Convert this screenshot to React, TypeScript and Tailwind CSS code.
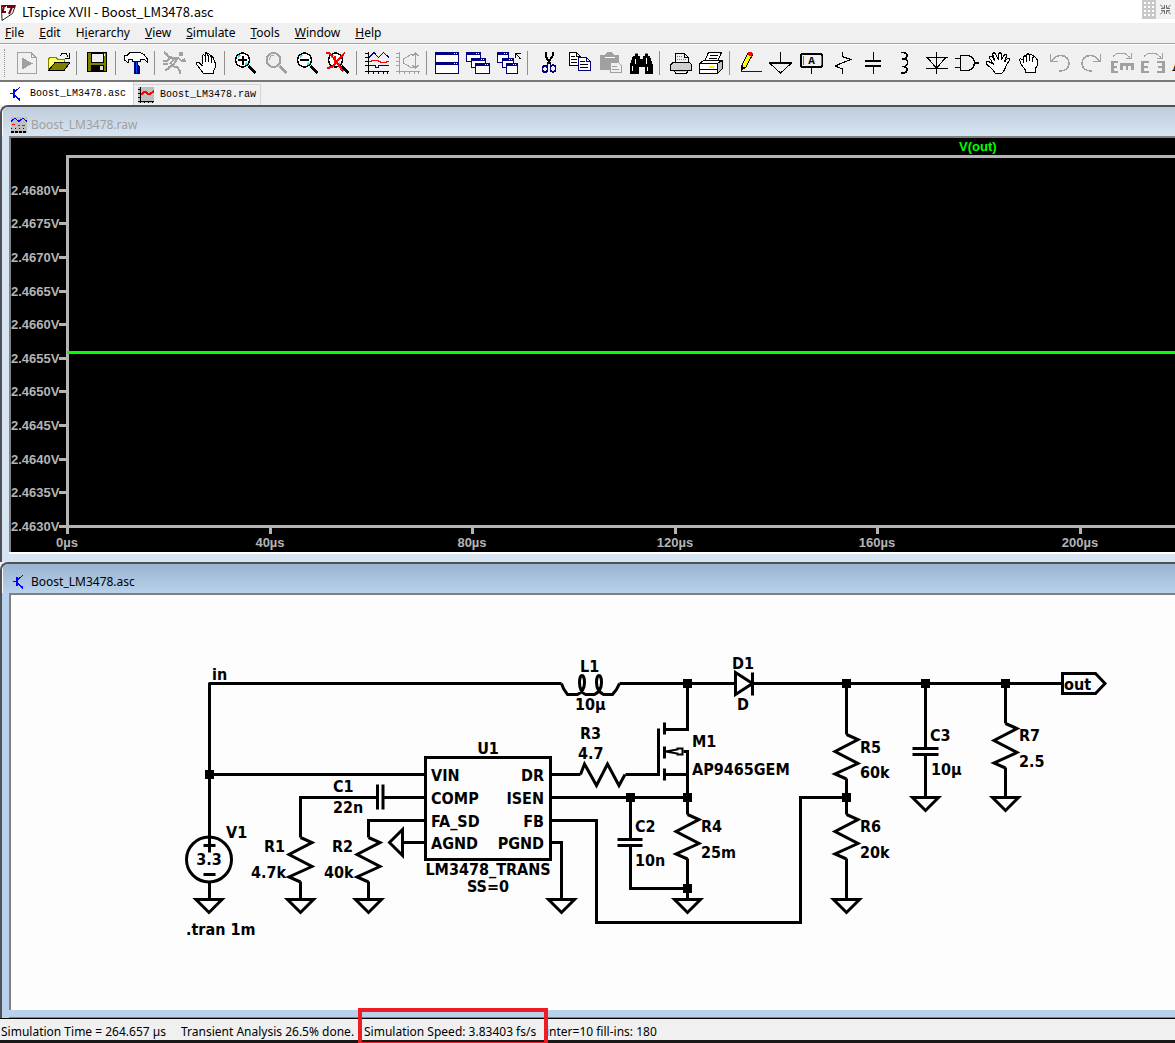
import { ReactNode } from 'react';
import clsx from 'clsx';

const MENUS = [
    { before: '', key: 'F', after: 'ile' },
    { before: '', key: 'E', after: 'dit' },
    { before: 'H', key: 'i', after: 'erarchy' },
    { before: '', key: 'V', after: 'iew' },
    { before: '', key: 'S', after: 'imulate' },
    { before: '', key: 'T', after: 'ools' },
    { before: '', key: 'W', after: 'indow' },
    { before: '', key: 'H', after: 'elp' },
];

const GRAY = '#a0a0a0';
const NAVY = '#000080';

/* ---------- toolbar icons, all drawn on a 24x24 grid ---------- */

function Magnifier({ color = '#000', glass = '#fff', children }: { color?: string; glass?: string; children?: ReactNode }) {
    return (
        <>
            <circle cx="9.5" cy="9" r="7" fill={glass} stroke={color} strokeWidth="1.5" />
            <path d="M5 6.5l2-2.5M12 14l2-2" stroke={glass === '#fff' ? '#00ffff' : 'none'} strokeWidth="2" />
            <path d="M15.5 15l7 7" stroke={color} strokeWidth="3.5" />
            {children}
        </>
    );
}

function Axes({ color }: { color: string }) {
    return <path d="M3.5 1v22M0 2.5h4M0 6.5h4M0 10.5h4M0 14.5h4M0 20.5h24M8.5 20v3M13.5 20v3M18.5 20v3M22.5 20v3" stroke={color} />;
}

function MiniWindow({ x, y, w, h }: { x: number; y: number; w: number; h: number }) {
    return (
        <>
            <rect x={x + 0.5} y={y + 0.5} width={w - 1} height={h - 1} fill="#fff" stroke={NAVY} />
            <rect x={x} y={y} width={w} height="3" fill={NAVY} />
            <path d={`M${x + w - 5} ${y + 1.5}h1m1 0h1`} stroke="#fff" />
        </>
    );
}

const ICONS: Record<string, ReactNode> = {
    run: (
        <>
            <path d="M2.5 1.5H16l5 5v16H2.5zM16 1.5v5h5" stroke={GRAY} />
            <path d="M7 6.5l11 6-11 6z" fill={GRAY} />
        </>
    ),
    open: (
        <>
            <path d="M2.5 19.5V8l2-2h5l2 2h6.500v4" fill="#ffff66" stroke="#808000" />
            <path d="M9 11.500h15l-6 8H2.500z" fill="#808000" stroke="#000" />
            <path d="M14 5l2-2.500h4l2 3.500M23.500 2v5h-5" stroke="#000" />
        </>
    ),
    save: (
        <>
            <rect x="2.5" y="1.5" width="19" height="19" fill="#808000" stroke="#000" />
            <rect x="6" y="2" width="12" height="9" fill="#f0f0f0" stroke="#000" />
            <rect x="6" y="14" width="13" height="7" fill="#000" />
            <rect x="15" y="15" width="3" height="4" fill="#e0e0e0" />
            <rect x="19" y="3" width="1" height="2" fill="#fff" />
        </>
    ),
    panel: (
        <>
            <path d="M.5 4.500h2.500l3-3h10l4 2 3 4 1 4.500-3-3-3-1h-2v2H8.500V8.500L6 8l-2 1.500v2L.5 9z" fill="#fff" stroke="#000" />
            <path d="M10 10h4v4l1.500 1v7.500H9.500V15l.5-1z" fill={NAVY} />
            <path d="M12.500 11v11" stroke="#0050ff" />
        </>
    ),
    halt: (
        <>
            <rect x="16" y="1" width="4" height="4" fill={GRAY} />
            <path d="M1 1l4 3M3 3l3 3h3M7 6.500h8l3 3h5M7 6.500L4 10H0M15 6l-4 7-3 2 6 1 3 4v3M9 14l-4 4-3 1M0 13h5M11 8l-4 5M18 10l4-2" stroke={GRAY} strokeWidth="2" />
        </>
    ),
    hand: (
        <path d="M8.500 13V5l1-1.500L11 5V3l1-1.500L13.500 3v1l1-1.500L16 4v2l1-1.500L19 6.500l2 5V17l-2 4v1.500H9.500L7 19l-4.500-6v-2h2l4 4M11.500 5v6M14.500 4v7M17.500 6v6" fill="#fff" stroke="#000" />
    ),
    zoomIn: (
        <Magnifier>
            <path d="M5 9h9M9.500 4.500v9" stroke="#000" strokeWidth="2" />
        </Magnifier>
    ),
    zoomBack: (
        <Magnifier color={GRAY} glass="#efefef">
            <circle cx="9.500" cy="9" r="7" stroke={GRAY} strokeWidth="2" />
            <path d="M5 9l2-4 3-1" stroke={GRAY} />
        </Magnifier>
    ),
    zoomOut: (
        <Magnifier>
            <path d="M5 9h9" stroke="#000" strokeWidth="2" />
        </Magnifier>
    ),
    zoomFit: (
        <Magnifier>
            <path d="M0 1.500h3l4 5 4 5 6 9M19 1.500L12 9l-6 7-5 1M9 5v9" stroke="#ff0000" strokeWidth="2" />
        </Magnifier>
    ),
    plot: (
        <>
            <Axes color="#000" />
            <path d="M4 6.500l5-5 4.500 5 5-5 5.500 5" stroke="#0000a0" />
            <path d="M4 10.500h2v-1h7v1h2v1h6v-1h3" stroke="#ff0000" />
            <path d="M4 14.500h6.500v2h3v-2H24" stroke={NAVY} />
        </>
    ),
    fft: (
        <>
            <Axes color={GRAY} />
            <path d="M19.500 2v16M16.500 5l3-3 3 3M16.500 14l3 3 3-3M19 3.500h-4L7.500 8v4l7.500 4.500h4" stroke={GRAY} />
        </>
    ),
    tile: (
        <>
            <MiniWindow x={0} y={1} w={24} h={12} />
            <MiniWindow x={0} y={11} w={24} h={12} />
        </>
    ),
    cascade: (
        <>
            <MiniWindow x={0} y={1} w={15} h={10} />
            <MiniWindow x={5} y={7} w={15} h={10} />
            <MiniWindow x={9} y={12} w={15} h={11} />
        </>
    ),
    closeAll: (
        <>
            <MiniWindow x={0} y={1} w={12} h={11} />
            <MiniWindow x={5} y={7} w={12} h={10} />
            <MiniWindow x={9} y={12} w={12} h={11} />
            <path d="M18.500 7V2h5M18.500 2l5 6" stroke="#000" />
        </>
    ),
    cut: (
        <>
            <path d="M9.500 1v4l5 8M16.500 1v4l-5 8" stroke="#000" strokeWidth="2" />
            <ellipse cx="9" cy="18" rx="2.500" ry="3.500" stroke={NAVY} strokeWidth="1.5" />
            <ellipse cx="17" cy="17.500" rx="2.500" ry="3.500" stroke={NAVY} strokeWidth="1.5" />
            <path d="M13 12l-2.500 3M13 12l2.500 3" stroke={NAVY} />
        </>
    ),
    copy: (
        <>
            <path d="M2.500 1.500h7l4 4v9h-11zM9.500 1.500v4h4" fill="#fff" stroke="#000" />
            <path d="M4 5.500h4M4 8.500h6M4 11.500h6" stroke="#000" />
            <path d="M11.500 6.500h8l4 4v9h-12zM19.500 6.500v4h4" fill="#fff" stroke={NAVY} />
            <path d="M13 10.500h5M13 13.500h8M13 16.500h8" stroke="#000" />
        </>
    ),
    paste: (
        <>
            <path d="M2 4h5l2-3h5l2 3h5v15H2z" fill={GRAY} />
            <path d="M7 6.500h10" stroke="#fff" />
            <path d="M12.500 11.500h8l3 3v7h-11z" fill="#efefef" stroke={GRAY} />
            <path d="M14 15.500h5M14 18.500h7" stroke={GRAY} />
        </>
    ),
    find: (
        <>
            <path d="M6 2h3v3h2v3h3V5h2V2h3v3h2l3 9v9h-8v-7h-6v7H1v-9l3-9h2z" fill="#000" />
            <path d="M6.500 8v5M3.500 15v5M17.500 7v6M18.500 16v4" stroke="#fff" strokeWidth="1.5" />
            <path d="M6 2.500h3M16 2.500h3" stroke="#888" />
        </>
    ),
    printSetup: (
        <>
            <path d="M7.500 12V2.500h9l4 4V12M16.500 2.500v4h4" fill="#f0f0f0" stroke="#000" />
            <path d="M9 5.500h6M9 8.500h10" stroke="#777" strokeDasharray="1 1" />
            <path d="M2.500 14l3-3h16l2 3v5h-3l-2 3.500H8L5.500 19h-3z" fill="#d0d0d0" stroke="#000" />
            <path d="M5 19.500h16" stroke="#000" />
            <path d="M8 21h10" stroke="#fff" />
        </>
    ),
    print: (
        <>
            <path d="M5.500 10l4-8.500h13l-4 8.500z" fill="#fff" stroke="#000" />
            <path d="M11 4.500h8M10 7.500h8" stroke="#000" />
            <path d="M.5 12.500l4-3h18l-4 3z" fill="#fff" stroke="#000" />
            <path d="M18.500 12.500l5-3v8l-5 5z" fill="#c0c0c0" stroke="#000" />
            <path d="M.5 12.500h18v10H.5zM.5 18.500h18" fill="#fff" stroke="#000" />
            <path d="M10 15.500h5" stroke="#ffee00" strokeWidth="2" />
        </>
    ),
    wire: (
        <>
            <path d="M4 14L10 2.500l4 2L8 16l-4 3z" fill="#ffff00" stroke="#000" />
            <path d="M10 1h4l1 2-1 3-4-2z" fill="#ff0000" />
            <path d="M3 14l4 3-4 3z" fill="#000" />
            <path d="M3 20.500h21" stroke="#0000ff" />
        </>
    ),
    ground: (
        <>
            <path d="M11.500 1v11M1.500 13l10 9 10-9" stroke="#000" />
            <path d="M0 12h23" stroke="#000" strokeWidth="2" />
        </>
    ),
    label: (
        <>
            <rect x="1" y="3" width="21" height="13" rx="2" stroke="#000" strokeWidth="2" />
            <path d="M3 5v9M21.500 5v9" stroke="#808000" />
            <path d="M11.500 16v7" stroke="#000" />
            <text x="11.500" y="13" textAnchor="middle" fill="#000" className="text-[11px] font-bold font-['Liberation_Mono',monospace]">A</text>
        </>
    ),
    resistor: <path d="M11.500 1v4.500l8 3L4 15l7.500 3v5" stroke="#000" strokeWidth="1.200" />,
    capacitor: (
        <>
            <path d="M11.500 1v9M11.500 16v7" stroke="#000" />
            <path d="M3 10h16M3 15h16" stroke="#000" strokeWidth="2" />
        </>
    ),
    inductor: <path d="M8 1.500h3c4 1 4 5.500 0 6.500H9h2c5 1 5 6.500 0 7.500H9h2c4 1 4 5.500 0 6.500H8" stroke="#000" strokeWidth="1.500" />,
    diode: <path d="M12.500 1v22M1.500 6.500H24M3.500 7l9 10 9-10M1.500 17.500H24" stroke="#000" strokeWidth="1.200" />,
    gate: (
        <>
            <path d="M5.500 4.500H13c4 1 6.500 4 6.500 7.500S17 19 13 19.500H5.500z" stroke="#000" strokeWidth="1.500" />
            <path d="M0 7.500h5M0 16.500h5" stroke="#000" />
            <path d="M19 12h5" stroke="#000" strokeWidth="2.500" />
        </>
    ),
    move: (
        <path d="M7.500 13L3.500 7 4 5l2 .5L9 10 6.500 3 8 1.500 9.500 3l3 6V3L14 1.500 15.500 3v6l3-5.500H20L20.500 5l-2 6 3.500-4h1.500v2l-4 7-1 3-3 3.500H9.500L7 19l-6.500-6V11l2-.5z" fill="#fff" stroke="#000" />
    ),
    drag: (
        <path d="M6.500 12V6L8 4.500 9.500 6V4L11 2.500l1.500 1.500v6V4l1.500-1L16 4.500V7l1.500-1.500L19 7v2l1.500-.5V14L18 18v3.500H8.500V19l-4-5-2-5 1-1.500L6 9M9.500 5v6M15.500 6v5" fill="#fff" stroke="#000" />
    ),
    undo: (
        <>
            <path d="M4 10C9 2 20 3 21 12c0 5-4 8.500-10 8" stroke={GRAY} strokeWidth="1.500" />
            <path d="M2.500 3v7.500H10" stroke={GRAY} strokeWidth="1.500" />
        </>
    ),
    redo: (
        <>
            <path d="M20 10C15 2 4 3 3 12c0 5 4 8.500 10 8" stroke={GRAY} strokeWidth="1.500" />
            <path d="M21.500 3v7.500H14" stroke={GRAY} strokeWidth="1.500" />
        </>
    ),
    rotate: (
        <>
            <path d="M3 5.500l4-3h8l5 4M21 2v5h-5" stroke={GRAY} />
            <path d="M1 10h3v12H1zM3 10h5v2H3zM3 15h4v2H3zM3 20h5v2H3zM10 12h14v3H10zM10 14h3v5h-3zM16 14h2v5h-2zM21 14h3v5h-3z" fill={GRAY} />
        </>
    ),
    mirror: (
        <>
            <path d="M3 5.500l4-3h8l5 4M21 2v5h-5" stroke={GRAY} />
            <path d="M0 10h3v12H0zM3 10h5v2H3zM3 15h4v2H3zM3 20h5v2H3zM21 10h3v12h-3zM16 10h5v2h-5zM17 15h4v2h-4zM16 20h5v2h-5z" fill={GRAY} />
        </>
    ),
    text: (
        <text x="0" y="20" fill="#000" className="text-[20px] font-bold font-['Liberation_Serif',serif]">Aa</text>
    ),
};

const TOOLBAR = [
    ['run', 'open'],
    ['save'],
    ['panel'],
    ['halt', 'hand'],
    ['zoomIn', 'zoomBack', 'zoomOut', 'zoomFit'],
    ['plot', 'fft'],
    ['tile', 'cascade', 'closeAll'],
    ['cut', 'copy', 'paste', 'find'],
    ['printSetup', 'print'],
    ['wire', 'ground', 'label', 'resistor', 'capacitor', 'inductor', 'diode', 'gate', 'move', 'drag', 'undo', 'redo', 'rotate', 'mirror', 'text'],
];

function Toolbar() {
    return (
        <div className="flex h-9 items-center overflow-hidden border-t border-white bg-[#f0f0f0]">
            <div className="ml-1 mr-[7px] h-7 w-px shrink-0 border-l border-dotted border-[#909090]" />
            {TOOLBAR.map((group, i) => (
                <div key={i} className="flex shrink-0 items-center">
                    {i > 0 && <div className="ml-0.5 mr-[5px] h-6 w-px bg-[#909090]" />}
                    {group.map((name) => (
                        <button key={name} aria-label={name} className="h-7 w-[31px] pl-[3px]">
                            <svg width="24" height="24" viewBox="0 0 24 24" fill="none" shapeRendering="crispEdges">
                                {ICONS[name]}
                            </svg>
                        </button>
                    ))}
                </div>
            ))}
        </div>
    );
}

function SchematicIcon() {
    return (
        <svg width="16" height="16" viewBox="0 0 16 16" fill="none" stroke="#0000ff" shapeRendering="crispEdges">
            <path d="M2 7.500h4" />
            <path d="M6 3v9" strokeWidth="2" />
            <path d="M7 5.500l5-4.500M7 9.500l5 5" />
            <path d="M9 14h3v-3z" fill="#0000ff" stroke="none" />
        </svg>
    );
}

function WaveIcon({ thick }: { thick?: boolean }) {
    return (
        <svg width="16" height="16" viewBox="0 0 16 16" fill="none" shapeRendering="crispEdges">
            <rect width="16" height="16" fill="#c0c0c0" />
            {thick ? (
                <>
                    <path d="M2.500 0v16M0 14.500h16M0 2.500h2M0 6.500h2M0 10.500h2M6.500 14v2M10.500 14v2M14.500 14v2" stroke="#000" />
                    <path d="M3 8l3-3h2l2 2h2l4-3" stroke="#ff0000" strokeWidth="2" />
                </>
            ) : (
                <>
                    <path d="M0 4.500l4-3.500 4 3.500L12 1l4 3.500" stroke="#0000ff" />
                    <path d="M1 7.500h3M7 8.500h2M11 8.500h3" stroke="#ff0000" />
                    <path d="M0 14.500h16" stroke="#000" strokeWidth="2" strokeDasharray="3 1" />
                    <path d="M0 11.500h16" stroke={NAVY} strokeDasharray="1 3" />
                </>
            )}
        </svg>
    );
}

/* ---------- waveform viewer ---------- */

const Y_TICKS = [
    { y: 52, label: '2.4680V' },
    { y: 85, label: '2.4675V' },
    { y: 119, label: '2.4670V' },
    { y: 153, label: '2.4665V' },
    { y: 186, label: '2.4660V' },
    { y: 220, label: '2.4655V' },
    { y: 253, label: '2.4650V' },
    { y: 287, label: '2.4645V' },
    { y: 321, label: '2.4640V' },
    { y: 354, label: '2.4635V' },
    { y: 388, label: '2.4630V' },
];

const X_TICKS = ['0µs', '40µs', '80µs', '120µs', '160µs', '200µs'];

function Plot() {
    return (
        <svg className="block h-[414px] w-full bg-black font-['Liberation_Sans',Arial,sans-serif] text-[13px] font-bold" fill="#b4b4b4">
            <g shapeRendering="crispEdges">
                <rect x="55" y="17" width="100%" height="3" />
                <rect x="55" y="17" width="3" height="379" />
                <rect x="55" y="387" width="100%" height="3" />
                <rect x="56" y="213" width="100%" height="3" fill="#00ff00" />
            </g>
            {Y_TICKS.map((t) => (
                <g key={t.label}>
                    <rect x="48" y={t.y - 1} width="8" height="3" shapeRendering="crispEdges" />
                    <text x="0" y={t.y + 5}>{t.label}</text>
                </g>
            ))}
            {X_TICKS.map((label, i) => {
                const x = 56 + Math.round(i * 202.5);
                return (
                    <g key={label}>
                        <rect x={x - 1} y="388" width="3" height="8" shapeRendering="crispEdges" />
                        <text x={x} y="409" textAnchor="middle">{label}</text>
                    </g>
                );
            })}
            <text x="948" y="13" fill="#00ff00">V(out)</text>
        </svg>
    );
}

/* ---------- schematic ---------- */

function Resistor({ x, y }: { x: number; y: number }) {
    return <path d={`M${x} ${y}l11.500 5-23 12 23 12-23 10.500 11.500 5`} />;
}

function Ground({ x, y }: { x: number; y: number }) {
    return <path d={`M${x - 13} ${y}h26l-13 13z`} />;
}

const JUNCTIONS = [
    [209, 774],
    [687, 683],
    [846, 683],
    [925, 683],
    [1005, 683],
    [630, 797],
    [687, 797],
    [687, 888],
    [846, 797],
];

type Label = [number, number, string, ('middle' | 'end')?];

const LABELS: Label[] = [
    [212, 680, 'in'],
    [226, 838, 'V1'],
    [209, 865, '3.3', 'middle'],
    [186, 935, '.tran 1m'],
    [264, 852, 'R1'],
    [251, 878, '4.7k'],
    [332, 852, 'R2'],
    [324, 878, '40k'],
    [333, 792, 'C1'],
    [333, 813, '22n'],
    [488, 754, 'U1', 'middle'],
    [431, 781, 'VIN'],
    [431, 804, 'COMP'],
    [431, 827, 'FA_SD'],
    [431, 849, 'AGND'],
    [544, 781, 'DR', 'end'],
    [544, 804, 'ISEN', 'end'],
    [544, 827, 'FB', 'end'],
    [544, 849, 'PGND', 'end'],
    [488, 875, 'LM3478_TRANS', 'middle'],
    [488, 892, 'SS=0', 'middle'],
    [580, 672, 'L1'],
    [575, 710, '10µ'],
    [580, 739, 'R3'],
    [578, 759, '4.7'],
    [692, 747, 'M1'],
    [692, 775, 'AP9465GEM'],
    [635, 832, 'C2'],
    [635, 866, '10n'],
    [701, 832, 'R4'],
    [701, 858, '25m'],
    [743, 669, 'D1', 'middle'],
    [743, 710, 'D', 'middle'],
    [860, 753, 'R5'],
    [860, 778, '60k'],
    [860, 832, 'R6'],
    [860, 858, '20k'],
    [930, 741, 'C3'],
    [931, 775, '10µ'],
    [1019, 741, 'R7'],
    [1019, 767, '2.5'],
    [1064, 690, 'out'],
];

function Schematic() {
    return (
        <svg className="block h-full w-full bg-[#fdfdfd] font-['DejaVu_Sans_Condensed',Tahoma,sans-serif] text-[16px] font-bold">
            {/* sheet scroll offset */}
            <g transform="translate(-11 -595)">
                <g fill="none" stroke="#000" strokeWidth="3" transform="translate(.5 .5)">
                    {/* wires */}
                    <path d="M209 852V683H561M619 683H735M753 683H1062M209 774H425M209 881V899" strokeLinejoin="round" />
                    <path d="M425 797H383M377 797H300V837M300 881V899M425 820H368V837M368 881V899M425 842H402" />
                    <path d="M550 774H580M625 774H658V728M550 797H687M550 820H596V922H800V797H846M550 842H561V899" />
                    <path d="M630 797V839M630 845V888H687M687 797V814M687 858V899" />
                    <path d="M846 683V734M846 778V814M846 858V899M925 683V748M925 754V797M1005 683V723M1005 767V797" />

                    {/* U1 */}
                    <rect x="425" y="757" width="125" height="102" />

                    {/* V1 */}
                    <circle cx="208.500" cy="859" r="22.500" />
                    <path d="M203 845h12M203 874h12" />

                    <Resistor x={300} y={837} />
                    <Resistor x={368} y={837} />
                    <Resistor x={687} y={814} />
                    <Resistor x={846} y={734} />
                    <Resistor x={846} y={814} />
                    <Resistor x={1005} y={723} />
                    <path d="M580 774l4-10.500 12 21.500 11-21.500 11.500 21.500 6-11" />

                    <Ground x={208.5} y={899} />
                    <Ground x={300} y={899} />
                    <Ground x={368} y={899} />
                    <Ground x={561} y={899} />
                    <Ground x={687} y={899} />
                    <Ground x={846} y={899} />
                    <Ground x={925} y={797} />
                    <Ground x={1005} y={797} />
                    <path d="M402 829v26l-13-13z" />

                    {/* capacitors */}
                    <path d="M377 784v25M382.500 784v25M617 839h25M617 845h25M912 748h26M912 754h26" />

                    {/* L1 */}
                    <path d="M561 683l2 5 4 6h10c4-2 7-6 7-12 0-4-1-7-2.500-7s-2.500 3-2.500 7c0 6 2 10 6 12h9c4-2 7-6 7-12 0-4-1-7-2.500-7s-2.500 3-2.500 7c0 6 3 10 7 12h9l4-5 3-6" />

                    {/* M1 */}
                    <path d="M664 722v12M664 746v12M664 768v12M664 729H687V683M664 774H687M687 797V751H683" />
                    <path d="M665 751l12-2v-1h5v6h-5v-1z" strokeWidth="2" />

                    {/* D1 */}
                    <path d="M735 672v22l17-11zM752 672v23" />

                    <path d="M1062 673h33l9.500 10-9.500 10h-33z" />
                </g>
                {JUNCTIONS.map(([x, y]) => (
                    <rect key={`${x}-${y}`} x={x - 4} y={y - 4} width="9" height="9" />
                ))}
                {LABELS.map(([x, y, text, anchor]) => (
                    <text key={`${x}-${y}`} x={x} y={y} textAnchor={anchor ?? 'start'}>{text}</text>
                ))}
            </g>
        </svg>
    );
}

function ChildWindow({ title, icon, active, className, children }: { title: string; icon: ReactNode; active?: boolean; className?: string; children: ReactNode }) {
    return (
        <section
            className={clsx(
                'flex flex-col overflow-hidden rounded-tl-lg border-l-2 border-t-2 border-[#505058] pl-[7px]',
                active ? 'bg-[#b9d1ea]' : 'bg-[#d7e4f2]',
                className
            )}
        >
            <header
                className={clsx(
                    '-ml-[7px] flex h-[29px] shrink-0 items-center gap-1 border-l border-white bg-linear-to-b pl-2 pt-1.5',
                    active ? 'from-[#99b4d1] to-[#b9d1ea] text-black' : 'from-[#bfcddb] to-[#d7e4f2] text-[#a0a0a0]'
                )}
            >
                {icon}
                <h2>{title}</h2>
            </header>
            {children}
        </section>
    );
}

export default function App() {
    return (
        <div className="flex h-screen flex-col overflow-hidden bg-[#f0f0f0] font-['Noto_Sans','Noto_Sans_CJK_SC',sans-serif] text-[12px] leading-4 text-black">
            <div className="flex h-[23px] shrink-0 items-center justify-between bg-white">
                <div className="flex items-center gap-1.5">
                    <svg width="16" height="18" viewBox="0 0 16 18" fill="none">
                        <path d="M1.500 2.500h14l-3 8-10.500 7z" fill="#fff" stroke="#222" />
                        <path d="M4 3L2.500 9H6M7 4h8M12 4l-3 7M2 3h4" stroke="#7a0010" strokeWidth="2" />
                    </svg>
                    <h1 className="font-['Noto_Sans_CJK_SC','Noto_Sans',sans-serif] text-[13px]">LTspice XVII - Boost_LM3478.asc</h1>
                </div>
                <div className="flex h-[19px] self-start">
                    <svg width="14" height="19" viewBox="0 0 14 19" shapeRendering="crispEdges">
                        <rect width="14" height="19" fill="#c8c8c8" />
                        {[2, 6, 10].map((x) => [2, 6, 10, 14].map((y) => (
                            <rect key={`${x}-${y}`} x={x} y={y} width="2" height="2" fill="#fff" />
                        )))}
                    </svg>
                    <button aria-label="Restore" className="w-[19px] bg-[#f2f2f2] pl-1">
                        <svg width="11" height="11" viewBox="0 0 11 11" fill="none" stroke="#707070">
                            <path d="M0 .5l4 4M1 4.500h3.500V1M11 .5l-4 4M6.500 1v3.500H10M0 10.500l4-4M1 6.500h3.500V10M11 10.500l-4-4M10 6.500H6.500V10" />
                        </svg>
                    </button>
                </div>
            </div>

            <nav className="flex h-[21px] shrink-0 gap-px border-b border-[#a0a0a0]">
                {MENUS.map((m) => (
                    <button key={m.key + m.after} className="px-[7px] first:pl-[5px]">
                        {m.before}<span className="underline">{m.key}</span>{m.after}
                    </button>
                ))}
            </nav>

            <Toolbar />

            <div className="flex h-[25px] shrink-0 items-end border-t-2 border-[#787878] font-['Liberation_Mono',monospace] text-[10px]">
                <button className="flex h-[23px] w-[134px] items-center gap-1.5 border-r border-[#d0d0d0] bg-white pl-2">
                    <SchematicIcon />
                    Boost_LM3478.asc
                </button>
                <button className="flex h-[21px] w-[127px] items-center gap-1.5 border-r border-t border-[#d4d4d4] pl-1">
                    <WaveIcon thick />
                    Boost_LM3478.raw
                </button>
            </div>

            <main className="flex min-h-0 flex-1 flex-col">
                <ChildWindow title="Boost_LM3478.raw" icon={<WaveIcon />} className="h-[457px] shrink-0">
                    <div className="shrink-0 border-l-2 border-t-2 border-[#808080]">
                        <Plot />
                    </div>
                    <div className="h-0.5 shrink-0 bg-white" />
                </ChildWindow>
                <ChildWindow title="Boost_LM3478.asc" icon={<SchematicIcon />} active className="min-h-0 flex-1">
                    <div className="min-h-0 flex-1 border-l-2 border-t-2 border-[#808080]">
                        <Schematic />
                    </div>
                    <div className="h-2 shrink-0 border-b border-[#20a8c8]" />
                </ChildWindow>
            </main>

            <footer className="flex h-[25px] shrink-0 items-center whitespace-nowrap border-b-[3px] border-t border-b-[#181818] border-t-black pl-px pt-1">
                <span className="w-[180px]">Simulation Time = 264.657 µs</span>
                <span className="w-[183px]">Transient Analysis 26.5% done.</span>
                <span className="relative w-[182px]">
                    Simulation Speed: 3.83403 fs/s
                    <span className="pointer-events-none absolute -bottom-1.5 -left-1.5 -right-0.5 -top-4 border-4 border-[#ee1c25]" />
                </span>
                <span>inter=10 fill-ins: 180</span>
            </footer>
        </div>
    );
}
